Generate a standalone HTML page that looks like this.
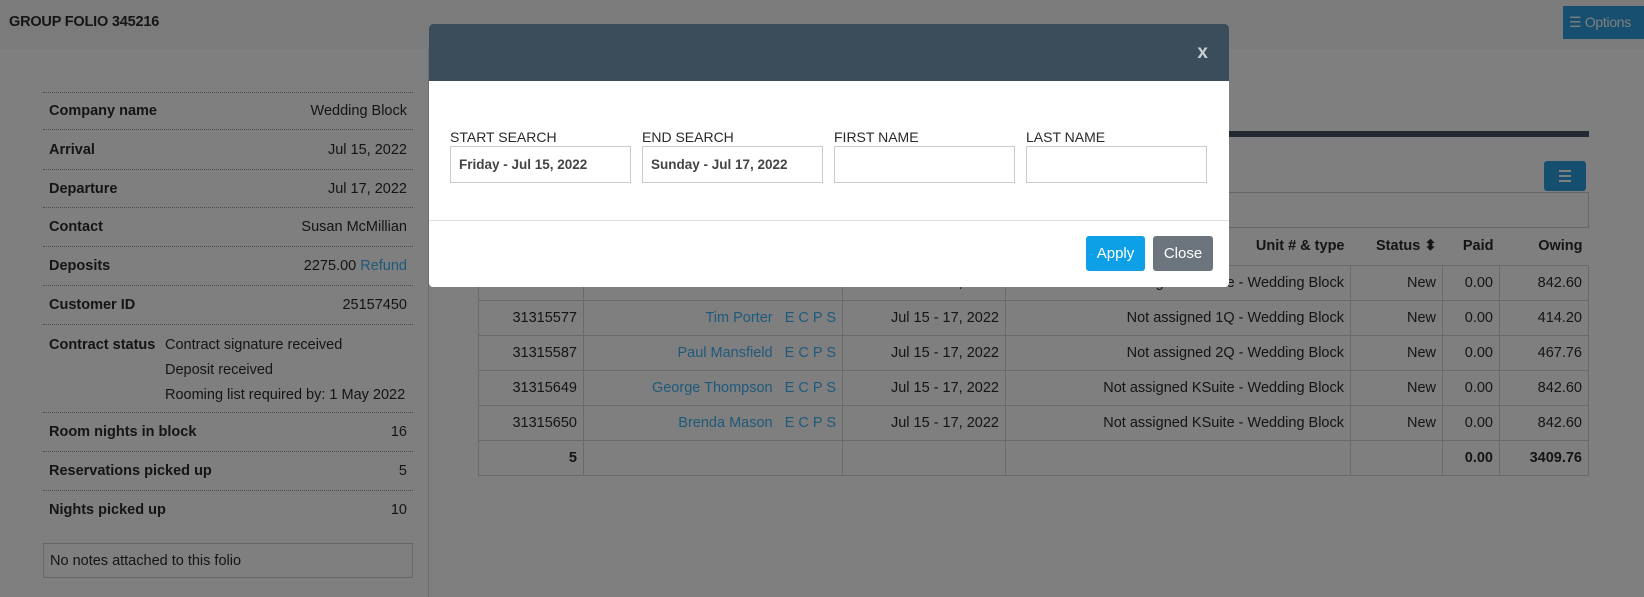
<!DOCTYPE html>
<html><head><meta charset="utf-8"><style>
*{box-sizing:border-box;margin:0;padding:0}
body{width:1644px;height:597px;overflow:hidden;background:#fff;font-family:"Liberation Sans",sans-serif;font-size:14.5px;color:#2a2a2a;position:relative}
.abs{position:absolute}
.hdr{left:0;top:0;width:1644px;height:49px;background:#f6f6f6}
.title{left:9px;top:14px;font-weight:bold;font-size:14.5px;letter-spacing:-0.2px}
.opt{left:1563px;top:6px;width:81px;height:33px;background:#2e9ee0;color:#fff;font-size:14px;line-height:33px;padding-left:6px;letter-spacing:-0.3px}
.sep{left:428px;top:49px;width:1px;height:548px;background:#ddd}
.lrow{left:43px;width:370px;border-top:1px dotted #999;display:flex;justify-content:space-between;padding:0 6px;align-items:center}
.lrow b{font-weight:bold}
a{color:#3eb4f4;text-decoration:none}
.notes{left:43px;top:543px;width:370px;height:35px;border:1px solid #ccc;padding:9px 6px}
.bar{left:478px;top:131px;width:1111px;height:6px;background:#465260}
.mbtn{left:1544px;top:161px;width:42px;height:30px;background:#2a9fe0;border-radius:3px}
.filt{left:478px;top:192px;width:1111px;height:36px;border:1px solid #ccc}
table{position:absolute;left:478px;top:227px;width:1111px;border-collapse:collapse}
td,th{text-align:right;padding:0 6px;height:35px;border:1px solid #d4d4d4}
th{border:none;height:38px;font-weight:bold}
.ov{left:0;top:0;width:1644px;height:597px;background:rgba(0,0,0,.5)}
.modal{left:429px;top:24px;width:800px;height:263px;background:#fff;border-radius:4px;overflow:hidden}
.mh{height:57px;background:#3b4d5a;position:relative}
.mx{position:absolute;right:21px;top:18px;color:#c9ced3;font-weight:bold;font-size:19px}
.lab{position:absolute;top:105px;font-size:14px}
.inp{position:absolute;top:122px;width:181px;height:37px;border:1px solid #ccc;font-weight:bold;font-size:13.5px;padding:10px 8px;color:#444}
.div{position:absolute;left:0;top:196px;width:800px;height:1px;background:#ddd}
.btn{position:absolute;top:212px;height:35px;border-radius:3px;color:#fff;font-size:15px;line-height:35px;text-align:center}
</style></head><body>
<div class="abs hdr"></div>
<div class="abs title">GROUP FOLIO 345216</div>
<div class="abs opt">☰ Options</div>
<div class="abs sep"></div>

<div class="abs lrow" style="top:92px;height:37px"><b>Company name</b><span>Wedding Block</span></div>
<div class="abs lrow" style="top:129px;height:40px"><b>Arrival</b><span>Jul 15, 2022</span></div>
<div class="abs lrow" style="top:169px;height:38px"><b>Departure</b><span>Jul 17, 2022</span></div>
<div class="abs lrow" style="top:207px;height:39px"><b>Contact</b><span>Susan McMillian</span></div>
<div class="abs lrow" style="top:246px;height:39px"><b>Deposits</b><span>2275.00 <a>Refund</a></span></div>
<div class="abs lrow" style="top:285px;height:39px"><b>Customer ID</b><span>25157450</span></div>
<div class="abs lrow" style="top:324px;height:88px;align-items:flex-start;justify-content:flex-start;padding-top:8px;line-height:25px"><b style="width:116px;flex:none">Contract status</b><span>Contract signature received<br>Deposit received<br>Rooming list required by: 1 May 2022</span></div>
<div class="abs lrow" style="top:412px;height:39px"><b>Room nights in block</b><span>16</span></div>
<div class="abs lrow" style="top:451px;height:39px"><b>Reservations picked up</b><span>5</span></div>
<div class="abs lrow" style="top:490px;height:39px"><b>Nights picked up</b><span>10</span></div>
<div class="abs notes">No notes attached to this folio</div>

<div class="abs bar"></div>
<div class="abs mbtn"><svg width="42" height="30"><path d="M15 10h12M15 15h12M15 20h12" stroke="#fff" stroke-width="2"/></svg></div>
<div class="abs filt"></div>
<table>
<tr><th style="width:105px">Res #</th><th style="width:259px">Guest</th><th style="width:163px">Dates</th><th style="width:345px">Unit # &amp; type</th><th style="width:92px">Status ⬍</th><th style="width:57px">Paid</th><th>Owing</th></tr>
<tr><td>31315560</td><td><a>Ann Smith&nbsp;&nbsp; E C P S</a></td><td>Jul 15 - 17, 2022</td><td>Not assigned KSuite - Wedding Block</td><td>New</td><td>0.00</td><td>842.60</td></tr>
<tr><td>31315577</td><td><a>Tim Porter&nbsp;&nbsp; E C P S</a></td><td>Jul 15 - 17, 2022</td><td>Not assigned 1Q - Wedding Block</td><td>New</td><td>0.00</td><td>414.20</td></tr>
<tr><td>31315587</td><td><a>Paul Mansfield&nbsp;&nbsp; E C P S</a></td><td>Jul 15 - 17, 2022</td><td>Not assigned 2Q - Wedding Block</td><td>New</td><td>0.00</td><td>467.76</td></tr>
<tr><td>31315649</td><td><a>George Thompson&nbsp;&nbsp; E C P S</a></td><td>Jul 15 - 17, 2022</td><td>Not assigned KSuite - Wedding Block</td><td>New</td><td>0.00</td><td>842.60</td></tr>
<tr><td>31315650</td><td><a>Brenda Mason&nbsp;&nbsp; E C P S</a></td><td>Jul 15 - 17, 2022</td><td>Not assigned KSuite - Wedding Block</td><td>New</td><td>0.00</td><td>842.60</td></tr>
<tr><td><b>5</b></td><td></td><td></td><td></td><td></td><td><b>0.00</b></td><td><b>3409.76</b></td></tr>
</table>

<div class="abs ov"></div>
<div class="abs modal">
<div class="mh"><span class="mx">x</span></div>
<div class="lab" style="left:21px">START SEARCH</div>
<div class="lab" style="left:213px">END SEARCH</div>
<div class="lab" style="left:405px">FIRST NAME</div>
<div class="lab" style="left:597px">LAST NAME</div>
<div class="inp" style="left:21px">Friday - Jul 15, 2022</div>
<div class="inp" style="left:213px">Sunday - Jul 17, 2022</div>
<div class="inp" style="left:405px"></div>
<div class="inp" style="left:597px"></div>
<div class="div"></div>
<div class="btn" style="left:657px;width:59px;background:#0ea0e6">Apply</div>
<div class="btn" style="left:724px;width:60px;background:#6c757d">Close</div>
</div>
</body></html>
